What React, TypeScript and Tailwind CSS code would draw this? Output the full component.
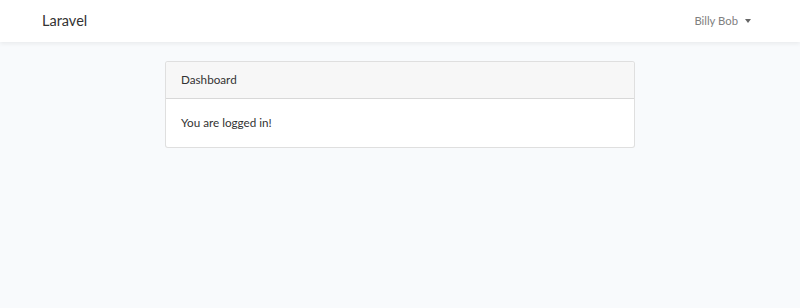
export default function App() {
  return (
    <div className="min-h-[308px] bg-[#f8fafc] font-['Lato',sans-serif] text-[#333]">
      <nav className="h-[42px] bg-white shadow-[0_2px_4px_rgba(0,0,0,0.06)] flex items-center justify-between pl-[42px] pr-[49px]">
        <a className="text-[14.5px] text-[#333]">Laravel</a>
        <div className="flex items-center gap-[7px] text-[11.3px] text-[#808080]">
          <span>Billy Bob</span>
          <span className="w-0 h-0 border-l-[3.5px] border-r-[3.5px] border-t-[4px] border-l-transparent border-r-transparent border-t-[#666]" />
        </div>
      </nav>
      <main className="flex justify-center pt-[19px]">
        <div className="w-[470px] bg-white border border-[rgba(0,0,0,0.125)] rounded-[3px] overflow-hidden">
          <div className="h-[37px] flex items-center px-[15px] bg-[#f7f7f7] border-b border-[rgba(0,0,0,0.125)] text-[11.7px]">
            Dashboard
          </div>
          <div className="h-[48px] flex items-center pb-[1px] px-[15px] text-[11.7px]">
            You are logged in!
          </div>
        </div>
      </main>
    </div>
  )
}
